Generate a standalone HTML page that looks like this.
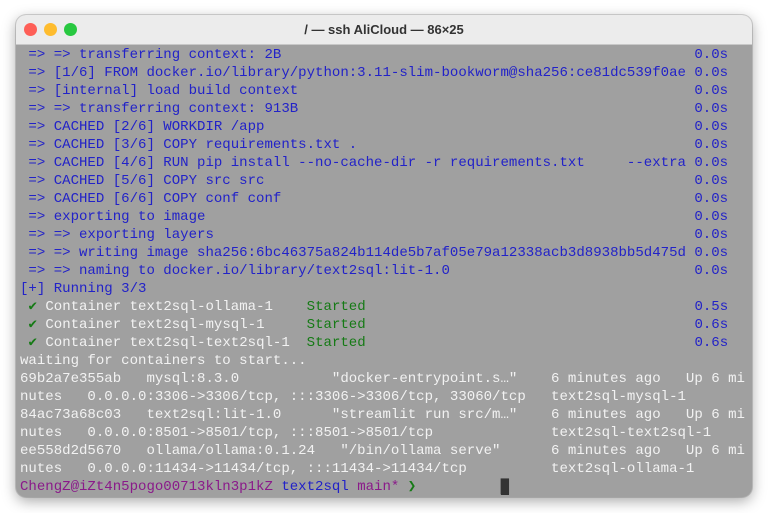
<!DOCTYPE html><html><head><style>
body{margin:0;width:768px;height:513px;background:#fff;overflow:hidden}
.win{position:absolute;left:16px;top:15px;width:736px;height:482px;border-radius:10px;overflow:hidden;background:#a0a0a0;box-shadow:0 4px 14px rgba(0,0,0,.35),0 0 0 1px rgba(0,0,0,.15)}
.tb{height:29px;background:#ececec;border-bottom:1px solid #c8c8c8;position:relative;font:bold 13px "Liberation Sans",sans-serif;color:#333;text-align:center;line-height:29px}
.d{position:absolute;top:8px;width:13px;height:13px;border-radius:50%}
pre{margin:0;position:absolute;left:4px;top:31px;font:14.05px/18px "Liberation Mono",monospace;color:#f2f2f2;white-space:pre}
.b{color:#2222c8}.g{color:#157a15}.p{color:#8a1a8a}
.cur{background:#333;color:#333}
</style></head><body><div class="win">
<div class="tb"><span class="d" style="left:8px;background:#fe5f57"></span><span class="d" style="left:28px;background:#febc2e"></span><span class="d" style="left:48px;background:#28c840"></span>/ — ssh AliCloud — 86×25</div>
<pre><span class="b"> =&gt; =&gt; transferring context: 2B                                                 0.0s
 =&gt; [1/6] FROM docker.io/library/python:3.11-slim-bookworm@sha256:ce81dc539f0ae 0.0s
 =&gt; [internal] load build context                                               0.0s
 =&gt; =&gt; transferring context: 913B                                               0.0s
 =&gt; CACHED [2/6] WORKDIR /app                                                   0.0s
 =&gt; CACHED [3/6] COPY requirements.txt .                                        0.0s
 =&gt; CACHED [4/6] RUN pip install --no-cache-dir -r requirements.txt     --extra 0.0s
 =&gt; CACHED [5/6] COPY src src                                                   0.0s
 =&gt; CACHED [6/6] COPY conf conf                                                 0.0s
 =&gt; exporting to image                                                          0.0s
 =&gt; =&gt; exporting layers                                                         0.0s
 =&gt; =&gt; writing image sha256:6bc46375a824b114de5b7af05e79a12338acb3d8938bb5d475d 0.0s
 =&gt; =&gt; naming to docker.io/library/text2sql:lit-1.0                             0.0s
[+] Running 3/3</span>
 <span class="g">✔</span> Container text2sql-ollama-1    <span class="g">Started</span>                                       <span class="b">0.5s</span>
 <span class="g">✔</span> Container text2sql-mysql-1     <span class="g">Started</span>                                       <span class="b">0.6s</span>
 <span class="g">✔</span> Container text2sql-text2sql-1  <span class="g">Started</span>                                       <span class="b">0.6s</span>
waiting for containers to start...
69b2a7e355ab   mysql:8.3.0           "docker-entrypoint.s…"    6 minutes ago   Up 6 mi
nutes   0.0.0.0:3306-&gt;3306/tcp, :::3306-&gt;3306/tcp, 33060/tcp   text2sql-mysql-1
84ac73a68c03   text2sql:lit-1.0      "streamlit run src/m…"    6 minutes ago   Up 6 mi
nutes   0.0.0.0:8501-&gt;8501/tcp, :::8501-&gt;8501/tcp              text2sql-text2sql-1
ee558d2d5670   ollama/ollama:0.1.24   "/bin/ollama serve"      6 minutes ago   Up 6 mi
nutes   0.0.0.0:11434-&gt;11434/tcp, :::11434-&gt;11434/tcp          text2sql-ollama-1
<span class="p">ChengZ@iZt4n5pogo00713kln3p1kZ</span> <span class="b">text2sql</span> <span class="p">main*</span> <span class="g">❯</span>          <span class="cur">█</span></pre>
</div></body></html>
